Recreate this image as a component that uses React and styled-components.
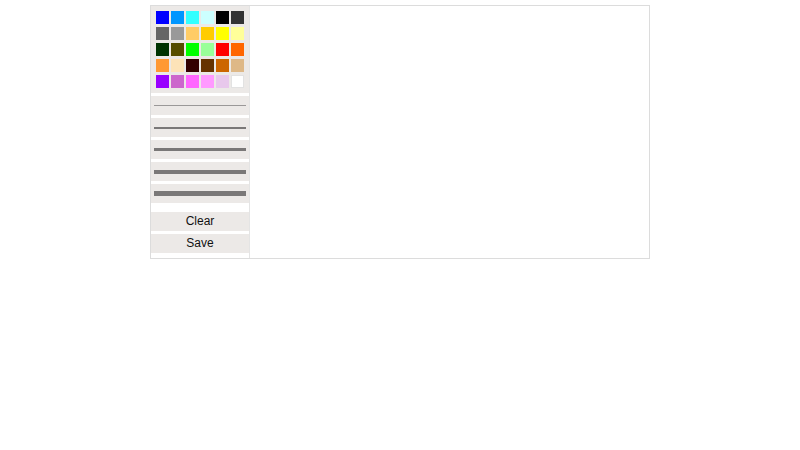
import * as React from "react"
import styled, { createGlobalStyle } from "styled-components";

const GlobalStyle = createGlobalStyle`
body{
	margin:0;
	background:#fff;
	font-family:"Liberation Sans", Arial, sans-serif;
}
`;

const Board = styled.div`
	display:flex;
	width:500px;
	height:254px;
	margin:5px auto 0;
	border:1px solid #dcdcdc;
	box-sizing:border-box;
`;

const Sidebar = styled.div`
	width:98px;
	flex:none;
	display:flex;
	flex-direction:column;
	border-right:1px solid #e4e4e4;
`;

const Palette = styled.div`
	display:grid;
	grid-template-columns:repeat(6, 13px);
	grid-auto-rows:13px;
	column-gap:2px;
	row-gap:3px;
	padding:5px 5px 5px;
	background:#ece9e7;
`;

const Swatch = styled.div`
	background:${p => p.$color};
	box-shadow:${p => p.$color === "#ffffff" ? "inset 0 0 0 1px #e2e2e2" : "none"};
`;

const Stroke = styled.div`
	display:flex;
	align-items:center;
	height:19px;
	margin-top:3px;
	padding:0 3px;
	background:#ece9e7;
	&::after{
		content:"";
		flex:1;
		height:${p => p.$size}px;
		background:${p => p.$size === 1 ? "#9a9898" : "#7a7878"};
	}
`;

const Actions = styled.div`
	display:flex;
	flex-direction:column;
	gap:3px;
	margin-top:9px;
`;

const Button = styled.div`
	height:19px;
	line-height:19px;
	text-align:center;
	font-size:12px;
	color:#111;
	background:#ece9e7;
`;

const Canvas = styled.div`
	flex:1;
	background:#fff;
`;

const colors = [
	"#0000ff", "#0096ff", "#33ffff", "#ccffff", "#000000", "#333333",
	"#666666", "#999999", "#ffcc66", "#ffcc00", "#ffff00", "#ffff99",
	"#003300", "#554d00", "#00ff00", "#99ff99", "#ff0000", "#ff6600",
	"#ff9933", "#fde3b8", "#330000", "#663300", "#cc6600", "#deb887",
	"#9900ff", "#cc66cc", "#ff66ff", "#ff99ff", "#e8c8ec", "#ffffff",
];

const sizes = [1, 2, 3, 4, 5];

const App = () => {
	return (
		<>
			<GlobalStyle />
			<Board>
				<Sidebar>
					<Palette>
						{colors.map((c, i) => <Swatch key={i} $color={c} />)}
					</Palette>
					{sizes.map(s => <Stroke key={s} $size={s} />)}
					<Actions>
						<Button>Clear</Button>
						<Button>Save</Button>
					</Actions>
				</Sidebar>
				<Canvas />
			</Board>
		</>
	);
}

export default App
